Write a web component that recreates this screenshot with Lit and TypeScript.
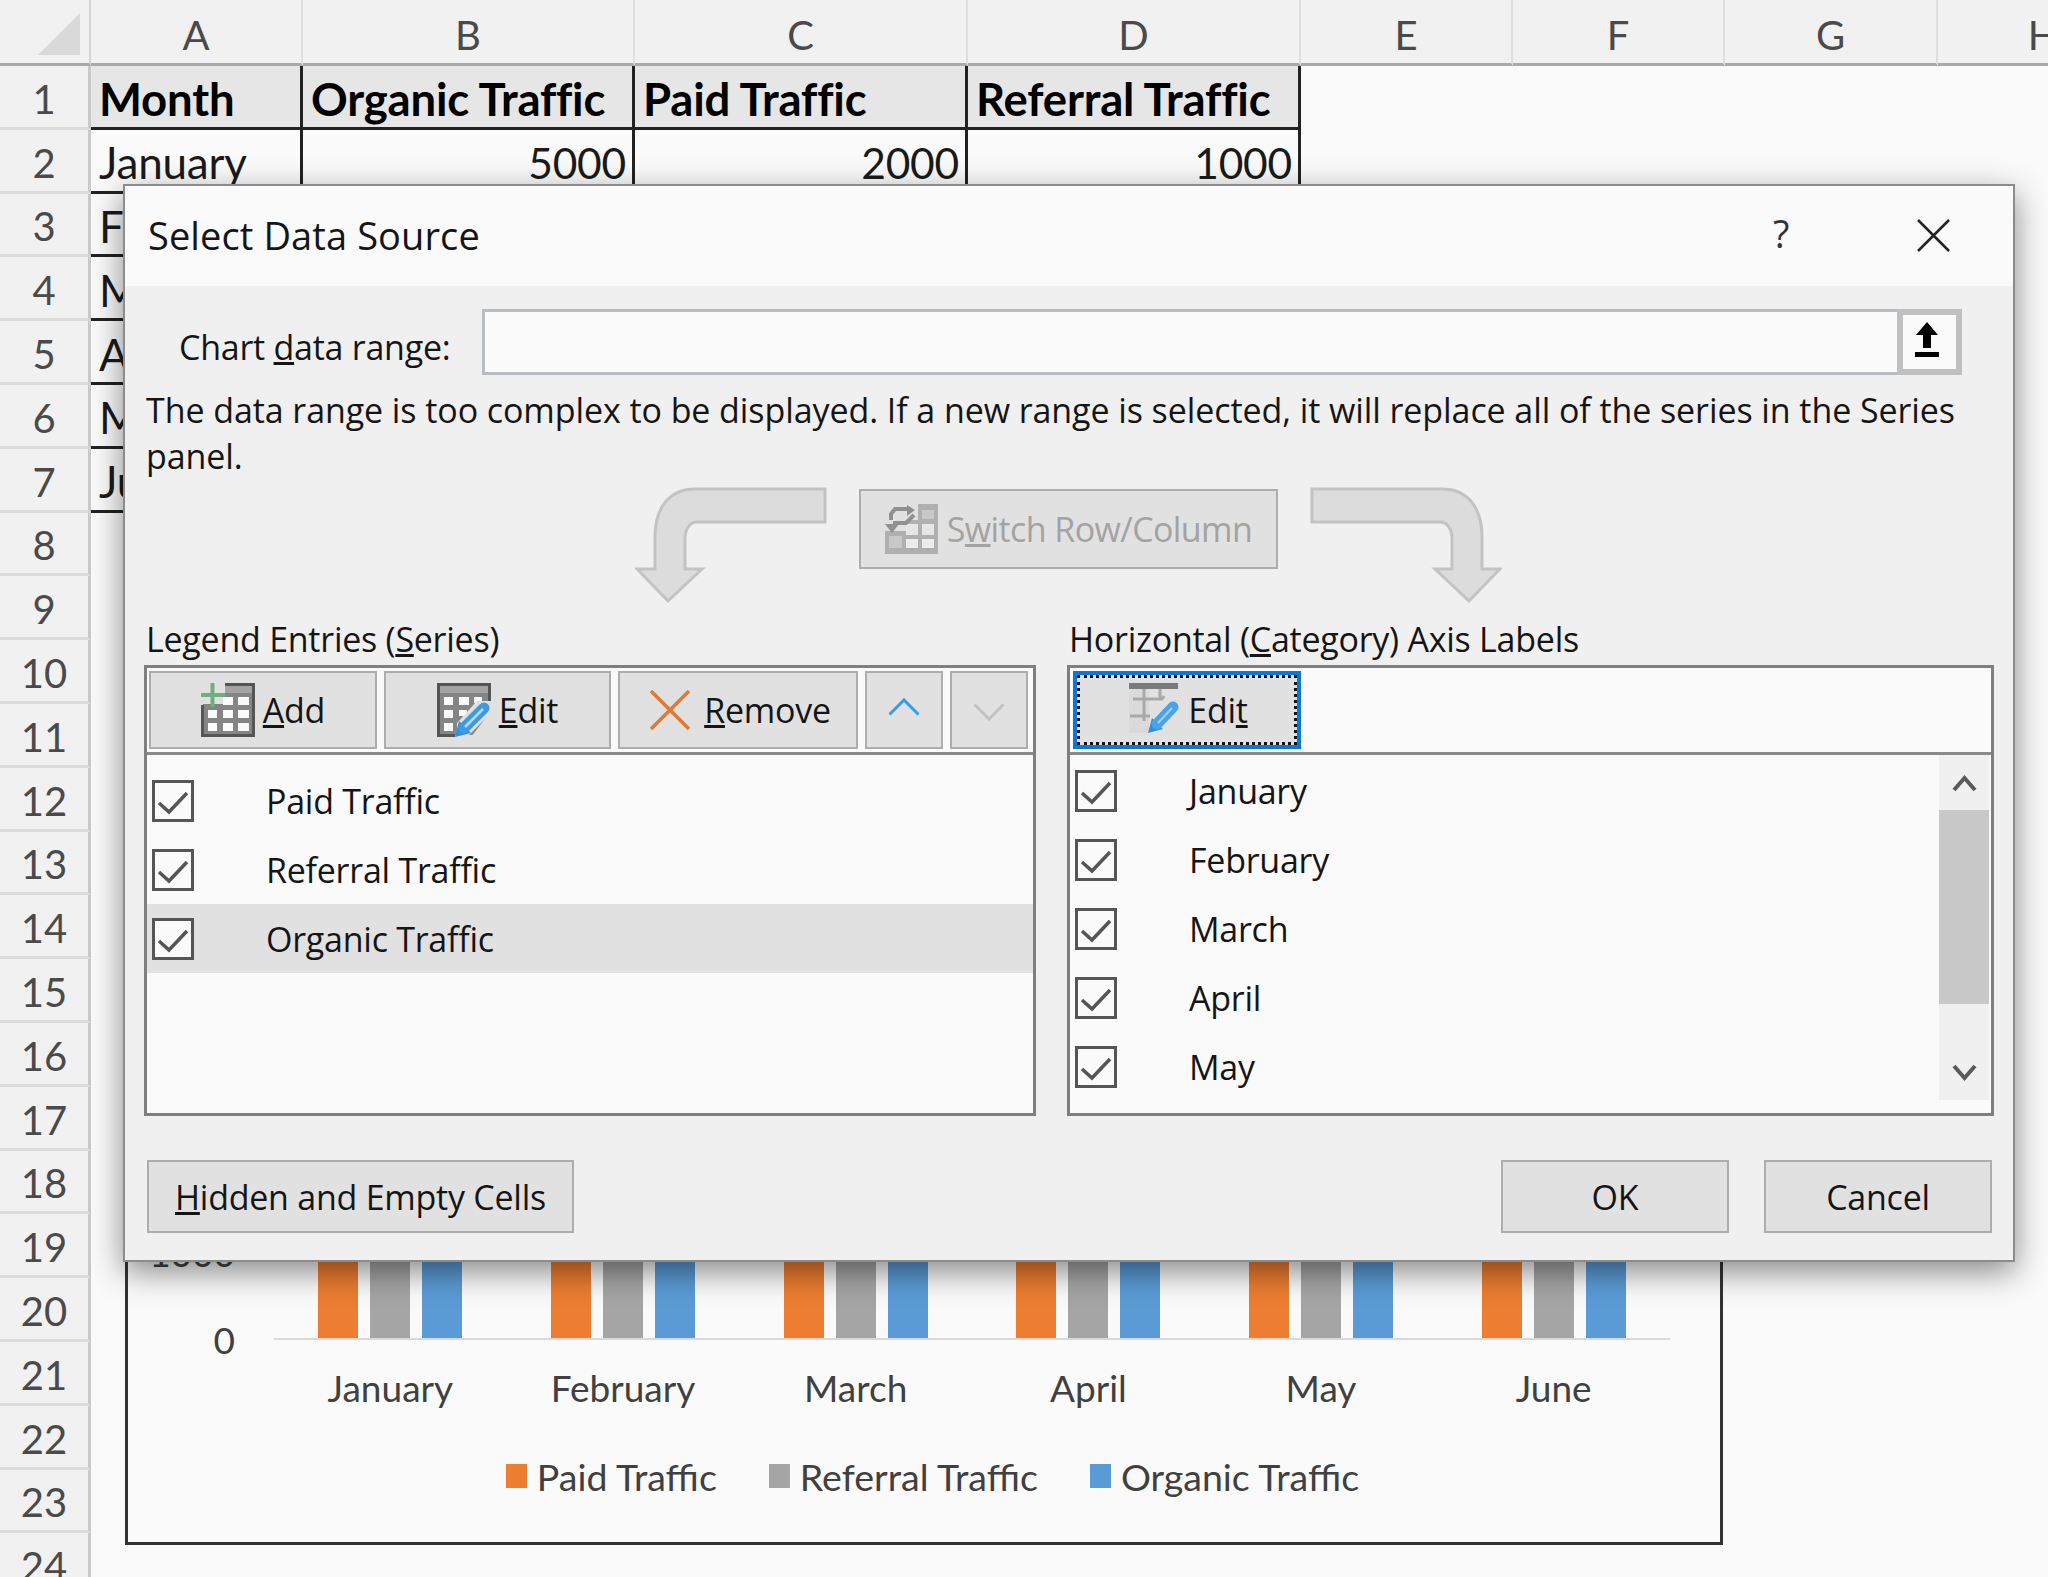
import { LitElement, css, html, svg } from "lit";
import { customElement } from "lit/decorators.js";

const COLUMNS = [
  { name: "A", width: 212 },
  { name: "B", width: 332 },
  { name: "C", width: 333 },
  { name: "D", width: 333 },
  { name: "E", width: 212 },
  { name: "F", width: 212 },
  { name: "G", width: 213 },
  { name: "H", width: 212 },
];

const SHEET: Record<number, string[]> = {
  1: ["Month", "Organic Traffic", "Paid Traffic", "Referral Traffic"],
  2: ["January", "5000", "2000", "1000"],
  3: ["February", "", "", ""],
  4: ["March", "", "", ""],
  5: ["April", "", "", ""],
  6: ["May", "", "", ""],
  7: ["June", "", "", ""],
};

const MONTHS = ["January", "February", "March", "April", "May", "June"];
const SERIES = [
  { name: "Paid Traffic", cls: "paid" },
  { name: "Referral Traffic", cls: "referral" },
  { name: "Organic Traffic", cls: "organic" },
];

// white cells of the little table glyphs, [x, y, w, h]
const ADD_CELLS = [
  [22, 14, 10, 8], [37, 14, 11, 8],
  [7, 27, 9, 8], [22, 27, 10, 8], [37, 27, 11, 8],
  [7, 40, 9, 8], [22, 40, 10, 8], [37, 40, 11, 8],
];
const EDIT_CELLS = [
  [7, 14, 9, 8], [22, 14, 10, 8], [37, 14, 8, 6],
  [7, 27, 9, 8], [22, 27, 8, 6],
  [7, 40, 9, 8],
];

const whiteCells = (cells: number[][]) =>
  cells.map(([x, y, w, h]) => svg`<rect x=${x} y=${y} width=${w} height=${h} fill="#fafafa" />`);

const chevron = (up: boolean, cls: string) => html`<svg class=${cls} viewBox="0 0 32 18" fill="none">
  <path d=${up ? "M1.500 16.500 16 2l14.500 14.500" : "M1.500 1.500 16 16 30.500 1.500"} stroke="currentColor" stroke-width="3" />
</svg>`;

const checkbox = html`<span class="check"
  ><svg viewBox="0 0 36 36" fill="none">
    <path d="M4 20 14 29 32 10" stroke="#555" stroke-width="3.500" /></svg
></span>`;

const pencil = svg`
  <path d="M18 54 22 38 34 50Z" fill="#2f8fdc" />
  <path d="M27 45 47 25" stroke="#3d9be3" stroke-width="11" stroke-linecap="round" />
  <path d="M28 44 46 26" stroke="#b4daf6" stroke-width="2.500" />`;

const addIcon = html`<svg class="icon" viewBox="0 0 54 54" fill="none">
  <rect x="2" y="10" width="50" height="42" fill="#858585" />
  ${whiteCells(ADD_CELLS)}
  <path d="M1.500 22V52.500H52.500V1.500H24" stroke="#555" stroke-width="3" />
  <rect x="24" y="3" width="27" height="7" fill="#a3a3a3" />
  <rect x="0" y="0" width="22" height="21" fill="#e1e1e1" />
  <path d="M11.500 0V24M0 12H24" stroke="#6fae82" stroke-width="4" />
</svg>`;

const editIcon = html`<svg class="icon" viewBox="0 0 54 54" fill="none">
  <rect x="2" y="10" width="50" height="42" fill="#858585" />
  ${whiteCells(EDIT_CELLS)}
  <path d="M34 54H52.500V30L34 54Z" fill="#e1e1e1" />
  <path d="M54 30 30 54H20V40L40 18H54Z" fill="#e1e1e1" />
  <path d="M18 52.500H1.500V1.500H52.500V18" stroke="#555" stroke-width="3" />
  <rect x="3" y="3" width="48" height="7" fill="#a3a3a3" />
  ${pencil}
</svg>`;

const editIconFaded = html`<svg class="icon" viewBox="0 0 54 50" fill="none">
  <rect x="3" y="6" width="20" height="44" fill="#dadada" />
  <path d="M18 6V38M7 16H36L38 13M34 6V16M4 33H24" stroke="#a9a9a9" stroke-width="3" />
  <rect x="3" y="0" width="49" height="6" fill="#7a7a7a" />
  <path d="M22 50 26 35 37 46Z" fill="#2f8fdc" />
  <path d="M31 41 47 24" stroke="#4aa3e8" stroke-width="11" stroke-linecap="round" />
  <path d="M32 40 46 25" stroke="#a4d2f4" stroke-width="2" />
</svg>`;

const switchIcon = html`<svg class="icon-switch" viewBox="0 0 53 50" fill="none">
  <path d="M0 27H21V16H33V0H53V50H0Z" fill="#b0b0b0" />
  <rect x="4" y="32" width="13" height="12" fill="#c8c8c8" />
  <rect x="21" y="20" width="12" height="11" fill="#e6e6e6" />
  <rect x="21" y="35" width="12" height="9" fill="#ececec" />
  <rect x="37" y="20" width="12" height="11" fill="#e6e6e6" />
  <rect x="37" y="35" width="12" height="9" fill="#ececec" />
  <rect x="37" y="6" width="12" height="9" fill="#c8c8c8" />
  <path d="M6 16V10L10 5H23" stroke="#909090" stroke-width="4" />
  <path d="M22 1 30 6 22 12Z" fill="#909090" />
  <path d="M29 11 21 19 H8" stroke="#909090" stroke-width="4" />
  <path d="M0 20H14L7 29Z" fill="#909090" />
</svg>`;

@customElement("app-root")
export class AppRoot extends LitElement {
  static styles = css`
    :host {
      display: block;
      position: relative;
      width: 2048px;
      height: 1577px;
      overflow: hidden;
      background: #fafafa;
      font-family: "Lato", sans-serif;
      color: #111;
    }

    * {
      box-sizing: border-box;
    }

    /* sheet */
    .sheet {
      display: grid;
      grid-template-rows: 66px repeat(24, 63.800px);
    }

    .corner,
    .col-head,
    .row-head {
      background: #f1f1f1;
      color: #4a4a4a;
      font-size: 40px;
      display: flex;
      align-items: center;
      justify-content: center;
    }

    .corner {
      border-right: 2px solid #d4d4d4;
      border-bottom: 3px solid #a9a9a9;
      padding-left: 28px;
      padding-top: 4px;
    }

    .corner svg {
      width: 42px;
      height: 42px;
    }

    .col-head {
      border-right: 2px solid #dedede;
      border-bottom: 3px solid #a9a9a9;
      padding-top: 6px;
    }

    .row-head {
      border-right: 3px solid #c9c9c9;
      border-bottom: 3px solid #dcdcdc;
      padding-top: 5px;
    }

    .cell {
      display: flex;
      align-items: center;
      padding: 4px 6px 0 8px;
      font-size: 44px;
      letter-spacing: -0.2px;
      color: #1a1a1a;
      white-space: nowrap;
      overflow: hidden;
    }

    .cell.bordered {
      border-right: 3px solid #222;
      border-bottom: 3px solid #222;
    }

    .cell.head {
      background: #e7e6e6;
      font-size: 45.500px;
      font-weight: 700;
      color: #000;
    }

    .cell.num {
      justify-content: flex-end;
      font-size: 42.500px;
    }

    /* chart */
    .chart {
      position: absolute;
      left: 125px;
      top: 600px;
      width: 1598px;
      height: 945px;
      border: 3px solid #333;
      background: #fafafa;
      display: flex;
      flex-direction: column;
      justify-content: flex-end;
      color: #404040;
      font-size: 37px;
    }

    .plot {
      display: flex;
      align-items: flex-end;
    }

    .yaxis {
      width: 146px;
      height: 129px;
      margin-bottom: -21px;
      padding-right: 39px;
      display: flex;
      flex-direction: column;
      justify-content: space-between;
      align-items: flex-end;
      line-height: 42px;
    }

    .bands,
    .categories {
      width: 1396px;
      display: flex;
    }

    .bands {
      border-bottom: 2px solid #d9d9d9;
    }

    .band {
      flex: 1;
      display: flex;
      justify-content: center;
      gap: 12px;
    }

    .bar {
      width: 40px;
      height: 130px;
    }

    .paid {
      background: #ed7d31;
    }

    .referral {
      background: #a5a5a5;
    }

    .organic {
      background: #5b9bd5;
    }

    .categories {
      margin: 24px 0 0 146px;
      height: 48px;
      line-height: 48px;
    }

    .categories span {
      flex: 1;
      text-align: center;
    }

    .legend {
      display: flex;
      justify-content: center;
      gap: 52px;
      height: 48px;
      margin: 40px 0 42px;
      padding-left: 17px;
      font-size: 37.500px;
    }

    .legend-item {
      display: flex;
      align-items: center;
      gap: 10px;
    }

    .swatch {
      width: 21px;
      height: 24px;
    }

    /* dialog */
    .dialog {
      position: absolute;
      left: 123px;
      top: 184px;
      width: 1892px;
      height: 1078px;
      border: 2px solid #8c8c8c;
      background: #f0f0f0;
      box-shadow: 0 10px 30px rgba(0, 0, 0, 0.45);
      font-family: "Open Sans", sans-serif;
      font-size: 34px;
      letter-spacing: -0.25px;
      color: #151515;
      display: flex;
      flex-direction: column;
      white-space: nowrap;
    }

    .title-bar {
      height: 100px;
      background: #fafafa;
      display: flex;
      align-items: center;
      padding: 0 63px 2px 23px;
    }

    .title {
      flex: 1;
      font-size: 38px;
      letter-spacing: 0.1px;
    }

    .help {
      font-size: 38px;
      width: 22px;
      margin: 0 122px 4px 0;
      color: #333;
    }

    .close {
      width: 33px;
      height: 33px;
    }

    .body {
      flex: 1;
      padding: 0 19px 0 19px;
      display: flex;
      flex-direction: column;
    }

    .range-row {
      display: flex;
      align-items: center;
      margin-top: 23px;
      margin-right: 32px;
      height: 66px;
    }

    .range-label {
      width: 338px;
      padding: 9px 0 0 35px;
    }

    .range-input {
      flex: 1;
      height: 100%;
      background: #fafafa;
      border: 3px solid #b9bcc0;
      display: flex;
      justify-content: flex-end;
    }

    .range-btn {
      width: 65px;
      margin: -3px -3px -3px 0;
      background: #fafafa;
      border: 6px solid #bfc0c2;
      display: flex;
      align-items: center;
      justify-content: center;
    }

    .range-btn svg {
      width: 26px;
      height: 36px;
      margin: 0 5px 4px 0;
    }

    .note {
      margin: 12px 0 0 2px;
      line-height: 46px;
      letter-spacing: -0.08px;
    }

    .switch-row {
      display: flex;
      align-items: flex-start;
      gap: 32px;
      margin-top: 8px;
      padding-left: 491px;
      height: 115px;
    }

    .flow {
      width: 192px;
      height: 117px;
    }

    .btn {
      display: flex;
      align-items: center;
      justify-content: center;
      background: #e1e1e1;
      border: 2px solid #adadad;
    }

    .btn.switch {
      width: 419px;
      height: 80px;
      margin-top: 2px;
      gap: 9px;
      color: #a3a3a3;
      letter-spacing: -0.6px;
    }

    .icon-switch {
      width: 53px;
      height: 50px;
    }

    .lists {
      display: grid;
      grid-template-columns: 892px 927px;
      column-gap: 31px;
      margin-top: 14px;
    }

    .list-label {
      height: 49px;
      line-height: 46px;
      padding-left: 2px;
    }

    .panel {
      height: 451px;
      border: 3px solid #7f7f7f;
      background: #fafafa;
      display: flex;
      flex-direction: column;
    }

    .toolbar {
      display: flex;
      gap: 7px;
      height: 87px;
      padding: 3px 5px 3px 2px;
      border-bottom: 3px solid #8a8a8a;
    }

    .toolbar .btn {
      height: 78px;
      gap: 8px;
    }

    .icon {
      width: 54px;
      height: 54px;
    }

    .add {
      width: 228px;
    }

    .edit {
      width: 227px;
    }

    .remove {
      width: 240px;
      padding-left: 4px;
    }

    .remove svg {
      width: 42px;
      height: 42px;
      margin-right: 5px;
    }

    .arrow {
      width: 78px;
    }

    .arrow svg {
      width: 32px;
      height: 18px;
    }

    .arrow .up {
      color: #3a9be6;
      margin-bottom: 6px;
    }

    .arrow .down {
      color: #c2c2c2;
      margin-top: 4px;
    }

    .toolbar .focused {
      width: 228px;
      margin-left: 1px;
      gap: 8px;
      border: 4px solid #0a78d7;
      outline: 3px dotted #111;
      outline-offset: -7px;
    }

    .focused .icon {
      height: 50px;
      margin-bottom: 4px;
    }

    .list-body {
      flex: 1;
      display: flex;
      min-height: 0;
    }

    .items {
      flex: 1;
    }

    .left .items {
      padding-top: 11px;
    }

    .right .items {
      padding-top: 1px;
    }

    .item {
      height: 69px;
      display: flex;
      align-items: center;
      gap: 72px;
      padding-left: 5px;
    }

    .item.selected {
      background: #e1e1e1;
    }

    .check {
      width: 42px;
      height: 42px;
      border: 3px solid #555;
      background: #fafafa;
      display: block;
    }

    .check svg {
      display: block;
      width: 36px;
      height: 36px;
    }

    .scrollbar {
      width: 50px;
      margin: 0 2px 13px 0;
      background: #f0f0f0;
      display: flex;
      flex-direction: column;
      align-items: center;
      color: #5a5a5a;
    }

    .scrollbar svg {
      width: 25px;
      height: 20px;
    }

    .scroll-up,
    .scroll-down {
      height: 55px;
      display: flex;
      align-items: center;
    }

    .scroll-gap {
      flex: 1;
    }

    .thumb {
      width: 100%;
      height: 194px;
      background: #c8c8c8;
    }

    .footer {
      display: flex;
      gap: 35px;
      margin: 44px 2px 0 3px;
    }

    .footer .btn {
      height: 73px;
      width: 228px;
    }

    .footer .hidden-cells {
      width: 427px;
      margin-right: auto;
    }
  `;

  private renderSheet() {
    const rows = Array.from({ length: 24 }, (_, i) => i + 1);
    return html`<div
      class="sheet"
      style="grid-template-columns: 91px ${COLUMNS.map((c) => `${c.width}px`).join(" ")}"
    >
      <div class="corner">
        <svg viewBox="0 0 42 42"><path d="M42 0V42H0Z" fill="#d9d9d9" /></svg>
      </div>
      ${COLUMNS.map((c) => html`<div class="col-head">${c.name}</div>`)}
      ${rows.map(
        (r) => html`<div class="row-head">${r}</div>
          ${COLUMNS.map((_, c) => this.renderCell(r, c))}`,
      )}
    </div>`;
  }

  private renderCell(row: number, col: number) {
    const inTable = row <= 7 && col < 4;
    const value = SHEET[row]?.[col] ?? "";
    const isNum = row > 1 && col > 0;
    return html`<div
      class="cell ${inTable ? "bordered" : ""} ${row === 1 && inTable ? "head" : ""} ${isNum ? "num" : ""}"
    >
      ${value}
    </div>`;
  }

  private renderChart() {
    return html`<div class="chart">
      <div class="plot">
        <div class="yaxis"><span>1000</span><span>0</span></div>
        <div class="bands">
          ${MONTHS.map(
            () => html`<div class="band">
              ${SERIES.map((s) => html`<div class="bar ${s.cls}"></div>`)}
            </div>`,
          )}
        </div>
      </div>
      <div class="categories">${MONTHS.map((m) => html`<span>${m}</span>`)}</div>
      <div class="legend">
        ${SERIES.map(
          (s) => html`<div class="legend-item">
            <span class="swatch ${s.cls}"></span>${s.name}
          </div>`,
        )}
      </div>
    </div>`;
  }

  private renderFlowArrow(flip: boolean) {
    return html`<svg class="flow" viewBox="0 0 192 117" fill="#dcdcdc" stroke="#c3c3c3" stroke-width="3">
      <path
        transform=${flip ? "translate(192 0) scale(-1 1)" : ""}
        d="M190 2V35H62C55 35 50 42 50 52V82H67L33 114 2 82H20V50C20 20 35 2 60 2Z"
      />
    </svg>`;
  }

  private renderDialog() {
    return html`<div class="dialog">
      <div class="title-bar">
        <span class="title">Select Data Source</span>
        <span class="help">?</span>
        <svg class="close" viewBox="0 0 33 33" fill="none">
          <path d="M1 1 32 32M32 1 1 32" stroke="#222" stroke-width="2.500" />
        </svg>
      </div>
      <div class="body">
        <div class="range-row">
          <span class="range-label">Chart <u>d</u>ata range:</span>
          <div class="range-input">
            <div class="range-btn">
              <svg viewBox="0 0 26 36">
                <path d="M13 0 24 13H17V26H9V13H2Z" fill="#000" />
                <rect x="1" y="30" width="24" height="5" fill="#000" />
              </svg>
            </div>
          </div>
        </div>
        <div class="note">
          The data range is too complex to be displayed. If a new range is selected, it will replace all of the
          series in the Series<br />panel.
        </div>
        <div class="switch-row">
          ${this.renderFlowArrow(false)}
          <div class="btn switch">${switchIcon}<span>S<u>w</u>itch Row/Column</span></div>
          ${this.renderFlowArrow(true)}
        </div>
        <div class="lists">
          <div class="list-label">Legend Entries (<u>S</u>eries)</div>
          <div class="list-label">Horizontal (<u>C</u>ategory) Axis Labels</div>
          <div class="panel left">
            <div class="toolbar">
              <div class="btn add">${addIcon}<span><u>A</u>dd</span></div>
              <div class="btn edit">${editIcon}<span><u>E</u>dit</span></div>
              <div class="btn remove">
                <svg viewBox="0 0 42 42" fill="none">
                  <path d="M2 2 40 40M40 2 2 40" stroke="#e07a35" stroke-width="3.500" />
                </svg>
                <span><u>R</u>emove</span>
              </div>
              <div class="btn arrow">${chevron(true, "up")}</div>
              <div class="btn arrow">${chevron(false, "down")}</div>
            </div>
            <div class="list-body">
              <div class="items">
                ${SERIES.map(
                  (s, i) => html`<div class="item ${i === 2 ? "selected" : ""}">${checkbox}<span>${s.name}</span></div>`,
                )}
              </div>
            </div>
          </div>
          <div class="panel right">
            <div class="toolbar">
              <div class="btn focused">${editIconFaded}<span>Edi<u>t</u></span></div>
            </div>
            <div class="list-body">
              <div class="items">
                ${MONTHS.slice(0, 5).map((m) => html`<div class="item">${checkbox}<span>${m}</span></div>`)}
              </div>
              <div class="scrollbar">
                <div class="scroll-up">
                  <svg viewBox="0 0 25 20" fill="none">
                    <path d="M2 17 12.500 5 23 17" stroke="currentColor" stroke-width="4" />
                  </svg>
                </div>
                <div class="thumb"></div>
                <div class="scroll-gap"></div>
                <div class="scroll-down">
                  <svg viewBox="0 0 25 20" fill="none">
                    <path d="M2 3 12.500 15 23 3" stroke="currentColor" stroke-width="4" />
                  </svg>
                </div>
              </div>
            </div>
          </div>
        </div>
        <div class="footer">
          <div class="btn hidden-cells"><span><u>H</u>idden and Empty Cells</span></div>
          <div class="btn">OK</div>
          <div class="btn">Cancel</div>
        </div>
      </div>
    </div>`;
  }

  render() {
    return html`${this.renderSheet()}${this.renderChart()}${this.renderDialog()}`;
  }
}
